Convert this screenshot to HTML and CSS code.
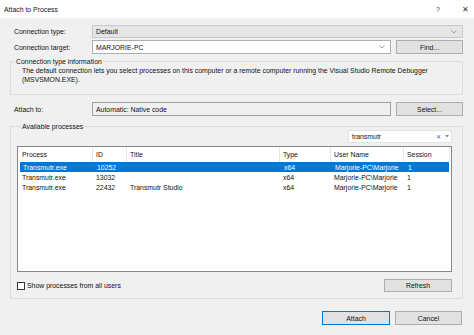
FILE: index.html
```html
<!DOCTYPE html>
<html>
<head>
<meta charset="utf-8">
<link rel="stylesheet" href="styles.css">
</head>
<body>
<div class="dialog">
  <div class="titlebar">
    <span class="title">Attach to Process</span>
    <span class="tb-help">?</span>
    <span class="tb-close">&#x2715;</span>
  </div>
  <div class="content">
    <div class="row r1">
      <span class="label">Connection type:</span>
      <div class="combo grey wide"><span>Default</span>
        <svg class="chev" width="6" height="4" viewBox="0 0 6 4"><polyline points="0.5,0.5 3,3 5.5,0.5" fill="none" stroke="#888" stroke-width="0.8"/></svg>
      </div>
    </div>
    <div class="row r2">
      <span class="label">Connection target:</span>
      <div class="combo white"><span>MARJORIE-PC</span>
        <svg class="chev" width="6" height="4" viewBox="0 0 6 4"><polyline points="0.5,0.5 3,3 5.5,0.5" fill="none" stroke="#888" stroke-width="0.8"/></svg>
      </div>
      <button class="btn">Find...</button>
    </div>
    <fieldset class="group info">
      <legend>Connection type information</legend>
      <p>The default connection lets you select processes on this computer or a remote computer running the Visual Studio Remote Debugger (MSVSMON.EXE).</p>
    </fieldset>
    <div class="row r3">
      <span class="label">Attach to:</span>
      <div class="combo field"><span>Automatic: Native code</span></div>
      <button class="btn">Select...</button>
    </div>
    <fieldset class="group procs">
      <legend>Available processes</legend>
      <div class="filter-row">
        <div class="filter"><span>transmutr</span><span class="fx">&#x2715;</span>
          <svg width="4" height="3" viewBox="0 0 4 3"><polygon points="0,0 4,0 2,2.5" fill="#888"/></svg>
        </div>
      </div>
      <div class="list">
        <div class="lrow head">
          <span>Process</span><span>ID</span><span>Title</span><span>Type</span><span>User Name</span><span>Session</span>
        </div>
        <div class="lrow sel">
          <span>Transmutr.exe</span><span>10252</span><span></span><span>x64</span><span>Marjorie-PC\Marjorie</span><span>1</span>
        </div>
        <div class="lrow">
          <span>Transmutr.exe</span><span>13032</span><span></span><span>x64</span><span>Marjorie-PC\Marjorie</span><span>1</span>
        </div>
        <div class="lrow">
          <span>Transmutr.exe</span><span>22432</span><span>Transmutr Studio</span><span>x64</span><span>Marjorie-PC\Marjorie</span><span>1</span>
        </div>
      </div>
      <div class="bottom-row">
        <label class="check"><span class="box"></span>Show processes from all users</label>
        <button class="btn refresh">Refresh</button>
      </div>
    </fieldset>
    <div class="footer">
      <button class="btn primary">Attach</button>
      <button class="btn">Cancel</button>
    </div>
  </div>
</div>
</body>
</html>
```
FILE: styles.css
```css
* { box-sizing: border-box; }
html, body { margin: 0; padding: 0; }
body {
  width: 474px;
  height: 335px;
  background: #f0f0f0;
  font-family: "Liberation Sans", Arial, sans-serif;
  font-size: 6.9px;
  color: #111;
  overflow: hidden;
}
.dialog { display: flex; flex-direction: column; height: 335px; }
.titlebar {
  height: 18px;
  background: #fff;
  display: flex;
  align-items: center;
  padding-left: 4px;
  font-size: 6.9px;
}
.title { flex: 1; }
.tb-help { width: 26px; font-size: 7px; color: #333; }
.tb-close { width: 12px; font-size: 7.5px; color: #333; }
.content { padding: 7px 11px 0 10px; display: flex; flex-direction: column; }
.row { display: flex; align-items: center; height: 13px; }
.label { width: 82px; padding-left: 4px; flex: none; }
.combo {
  height: 13px;
  border: 1px solid #adadad;
  display: flex;
  align-items: center;
  padding-left: 3px;
  padding-right: 5px;
}
.combo span { flex: 1; }
.combo.grey { background: #e5e5e5; flex: 1; border-color: #c8c8c8; }
.combo.white { background: #fff; width: 299px; }
.combo.field { background: #f0f0f0; width: 299px; border-color: #a0a0a0; }
.r2 { margin-top: 2px; height: 14px; }
.r2 .combo { height: 14px; }
.btn {
  font: inherit;
  color: #111;
  background: #e1e1e1;
  border: 1px solid #adadad;
  height: 14px;
  width: 67px;
  margin-left: 5px;
  padding: 0;
  border-radius: 0;
}
.group {
  margin: 0;
  border: 1px solid #dcdcdc;
  padding: 0;
  min-width: 0;
}
.group legend { padding: 0 1px; margin-left: 4px; }
.info { margin-top: 4px; height: 37px; }
.info p { margin: 1px 0 0 11px; line-height: 9px; width: 420px; }
.r3 { margin-top: 7px; height: 14px; }
.r3 .combo { height: 14px; }
.procs { margin-top: 7px; height: 176px; padding: 0 10px 0 6px; }
.filter-row { display: flex; justify-content: flex-end; margin-top: 0px; padding-right: 0; }
.filter {
  width: 104px;
  height: 13px;
  background: #fff;
  border: 1px solid #e3e3e3;
  display: flex;
  align-items: center;
  padding-left: 3px;
  padding-right: 2px;
}
.filter span:first-child { flex: 1; }
.fx { color: #1a6ec8; font-size: 6px; margin-right: 4px; }
.list {
  margin-top: 3px;
  height: 126px;
  background: #fff;
  border: 1px solid #828790;
  padding: 0 1px;
}
.lrow {
  display: grid;
  grid-template-columns: 74px 34px 153px 51px 73px 1fr;
  height: 10px;
  align-items: center;
}
.lrow span { padding-left: 3px; white-space: nowrap; }
.lrow.head { height: 15px; }
.lrow.head span { border-right: 1px solid #e5e5e5; height: 15px; display: flex; align-items: center; }
.lrow.sel { background: #0078d7; color: #fff; margin: 0 1px; }
.bottom-row { display: flex; align-items: center; justify-content: space-between; margin-top: 7px; }
.check { display: flex; align-items: center; }
.box { width: 8px; height: 8px; border: 1px solid #333; background: #fff; margin-right: 2px; }
.refresh { height: 13px; width: 68px; margin-left: 0; }
.footer { display: flex; justify-content: flex-end; margin-top: 12px; padding-right: 1px; }
.footer .btn { height: 14px; width: 67px; margin-left: 5px; }
.btn.primary { border: 1px solid #0078d7; width: 68px; }
```
